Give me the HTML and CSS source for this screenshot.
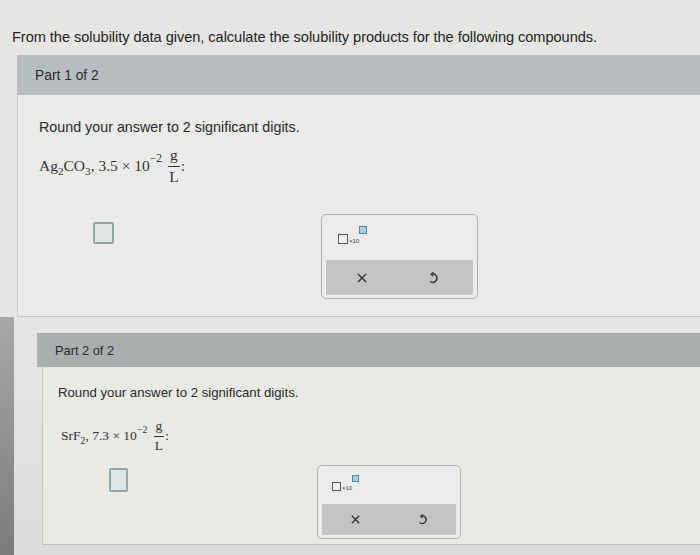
FILE: index.html
```html
<!DOCTYPE html>
<html>
<head>
<meta charset="utf-8">
<link rel="stylesheet" href="styles.css">
</head>
<body>
<div class="screen">
  <p class="title">From the solubility data given, calculate the solubility products for the following compounds.</p>

  <section class="part part1">
    <div class="part-head">Part 1 of 2</div>
    <div class="part-body">
      <p class="prompt">Round your answer to 2 significant digits.</p>
      <div class="formula">
        <span>Ag<sub>2</sub>CO<sub>3</sub>, 3.5 × 10<sup>−2</sup></span>
        <span class="frac"><span class="num">g</span><span class="den">L</span></span><span class="colon">:</span>
      </div>
      <div class="answer-row">
        <div class="answer-box"></div>
        <div class="tools">
          <div class="sci">
            <span class="sq"></span><span class="x10">×10</span><span class="sq sup"></span>
          </div>
          <div class="bar">
            <svg class="ic" viewBox="0 0 12 12" width="12" height="12"><path d="M2 2 L10 10 M10 2 L2 10" stroke="#333" stroke-width="1.5" fill="none"/></svg>
            <svg class="ic" viewBox="0 0 12 12" width="12" height="12"><path d="M4.2 2.2 A4.2 4.2 0 1 1 3 9.3" stroke="#333" stroke-width="1.5" fill="none"/><path d="M6.6 0.6 L4.2 2.2 L6.2 4.4" stroke="#333" stroke-width="1.4" fill="none"/></svg>
          </div>
        </div>
      </div>
    </div>
  </section>

  <div class="lower">
    <div class="edge"></div>
    <section class="part part2">
      <div class="part-head">Part 2 of 2</div>
      <div class="part-body">
        <p class="prompt">Round your answer to 2 significant digits.</p>
        <div class="formula">
          <span>SrF<sub>2</sub>, 7.3 × 10<sup>−2</sup></span>
          <span class="frac"><span class="num">g</span><span class="den">L</span></span><span class="colon">:</span>
        </div>
        <div class="answer-row">
          <div class="answer-box"></div>
          <div class="tools">
            <div class="sci">
              <span class="sq"></span><span class="x10">×10</span><span class="sq sup"></span>
            </div>
            <div class="bar">
              <svg class="ic" viewBox="0 0 12 12" width="11" height="11"><path d="M2 2 L10 10 M10 2 L2 10" stroke="#333" stroke-width="1.5" fill="none"/></svg>
              <svg class="ic" viewBox="0 0 12 12" width="11" height="11"><path d="M4.2 2.2 A4.2 4.2 0 1 1 3 9.3" stroke="#333" stroke-width="1.5" fill="none"/><path d="M6.6 0.6 L4.2 2.2 L6.2 4.4" stroke="#333" stroke-width="1.4" fill="none"/></svg>
            </div>
          </div>
        </div>
      </div>
    </section>
  </div>
</div>
</body>
</html>
```

FILE: styles.css
```css
* { box-sizing: border-box; }
html, body { margin: 0; padding: 0; }
body {
  width: 700px;
  height: 555px;
  overflow: hidden;
  background: #e6e6e4;
  font-family: "Liberation Sans", Arial, sans-serif;
  color: #2a2a2a;
}
.screen { display: flex; flex-direction: column; height: 555px; }

.title {
  margin: 0;
  padding: 28px 0 0 12px;
  font-size: 14.6px;
  line-height: 18px;
  letter-spacing: -0.05px;
  color: #222;
}

.part1 { margin: 9px 0 0 17px; }
.part-head {
  display: flex;
  align-items: center;
}
.part1 .part-head {
  height: 40px;
  background: #b7bec1;
  padding-left: 18px;
  font-size: 13.8px;
}
.part1 .part-body {
  background: #ebebe9;
  border-left: 1px solid #cfd0ce;
  border-bottom: 1px solid #c5c6c4;
  padding: 23px 0 17px 21px;
}
.prompt { margin: 0; line-height: 18px; }
.part1 .prompt { font-size: 14.3px; }

.formula {
  display: flex;
  align-items: center;
  font-family: "Liberation Serif", "Times New Roman", serif;
  color: #333;
  white-space: pre;
}
.part1 .formula { font-size: 15.5px; margin-top: 10px; height: 40px; }
.formula sub { font-size: 0.72em; vertical-align: -0.4em; line-height: 0; }
.formula sup { font-size: 0.74em; vertical-align: 0.75em; line-height: 0; }
.frac {
  display: inline-flex;
  flex-direction: column;
  align-items: center;
  margin-left: 6px;
  font-size: 1em;
  line-height: 1.2;
}
.frac .num { border-bottom: 1px solid #333; padding: 0 2px 1px; }
.frac .den { padding-top: 1px; }
.colon { margin-left: 1px; }

.answer-row { display: flex; align-items: flex-start; }
.part1 .answer-row { margin-top: 28px; padding-left: 54px; gap: 207px; }
.answer-box {
  border: 2px solid #94a5a5;
  background: #dfe6e6;
  border-radius: 2px;
}
.part1 .answer-box { width: 21px; height: 22px; margin-top: 8px; }

.tools {
  display: flex;
  flex-direction: column;
  border: 1.5px solid #aeb0af;
  border-radius: 5px;
  background: #ececea;
}
.part1 .tools { width: 157px; height: 85px; padding: 0 4px 3px; }
.sci { display: flex; align-items: flex-end; flex: 1; }
.part1 .sci { padding: 0 0 16px 12px; }
.sq {
  display: inline-block;
  border: 1.5px solid #555;
  background: #f2f2f2;
}
.part1 .sq { width: 10px; height: 10px; }
.sq.sup {
  border-color: #4d8ea4;
  background: #a9d0dc;
  align-self: flex-start;
}
.part1 .sq.sup { width: 8px; height: 8px; margin-top: 11px; }
.x10 { font-size: 6px; color: #444; margin: 0 0 0 1px; }

.bar {
  display: flex;
  align-items: center;
  justify-content: space-around;
  background: #c3c5c4;
  border-radius: 1px;
}
.part1 .bar { height: 35px; padding: 0 4px 0 0; }

/* lower part */
.lower {
  display: flex;
  flex: 1;
  background: linear-gradient(#e6e6e4, #dcdcda);
}
.edge {
  width: 14px;
  background: linear-gradient(#a7a9a7, #7a7c7a);
}
.part2 { flex: 1; margin: 16px 0 10px 23px; display: flex; flex-direction: column; }
.part2 .part-head {
  height: 34px;
  background: #aaaeae;
  padding-left: 18px;
  font-size: 12.8px;
}
.part2 .part-body {
  flex: 1;
  margin-left: 5px;
  background: #e9e9e6;
  border-left: 1px solid #c8c9c7;
  border-bottom: 1px solid #bfc0be;
  padding: 17px 0 0 15px;
}
.part2 .prompt { font-size: 13.2px; }
.part2 .formula { font-size: 13.5px; margin-top: 15px; height: 38px; padding-left: 3px; }
.part2 .answer-row { margin-top: 10px; padding-left: 51px; gap: 189px; }
.part2 .answer-box { width: 19px; height: 24px; margin-top: 3px; }
.part2 .tools { width: 144px; height: 74px; padding: 0 4px 3px; }
.part2 .sci { padding: 0 0 13px 10px; }
.part2 .sq { width: 9px; height: 9px; }
.part2 .sq.sup { width: 7px; height: 7px; margin-top: 9px; }
.part2 .bar { height: 31px; }
```
